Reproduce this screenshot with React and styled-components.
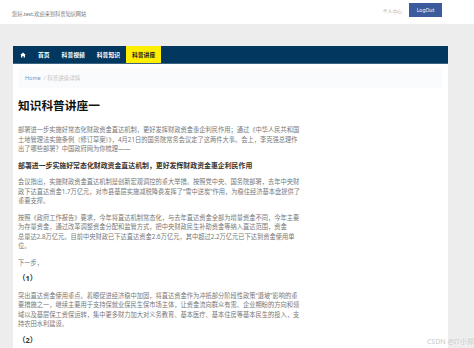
import styled, { createGlobalStyle } from "styled-components";

const GlobalStyle = createGlobalStyle`
  html, body {
    margin: 0;
    padding: 0;
    overflow: hidden;
    background: #ededed;
    font-family: "Noto Sans", "Noto Sans CJK SC", sans-serif;
  }
`;

const navItems = ["首页", "科普视频", "科普知识", "科普讲座"];

const App = () => {
  return (
    <Page>
      <GlobalStyle />
      <TopBar>
        <Welcome>您好,test,欢迎来到科普知识网站</Welcome>
        <UserBox>
          <UserLink>个人中心</UserLink>
          <LogOut>LogOut</LogOut>
        </UserBox>
      </TopBar>
      <Main>
        <Nav>
          <NavItem>
            <svg width="6" height="6" viewBox="0 0 12 12">
              <path d="M6 1 L11.5 6 H10 V11 H7.3 V7.8 H4.7 V11 H2 V6 H0.5 Z" fill="#fff" />
            </svg>
          </NavItem>
          {navItems.map((item, i) => (
            <NavItem key={item} active={i === navItems.length - 1}>
              {item}
            </NavItem>
          ))}
        </Nav>
        <Panel>
          <Crumbs>
            <CrumbLink>Home</CrumbLink>
            <CrumbRest>/ 科普讲座详情</CrumbRest>
          </Crumbs>
          <Article>
            <Title>知识科普讲座一</Title>
            <Para>
              部署进一步实施好常态化财政资金直达机制，更好发挥财政资金惠企利民作用；通过《中华人民共和国土地管理法实施条例（修订草案）》，4月21日的国务院常务会议定了这两件大事。会上，李克强总理作出了哪些部署？中国政府网为你梳理——
            </Para>
            <Heading>部署进一步实施好常态化财政资金直达机制，更好发挥财政资金惠企利民作用</Heading>
            <Para>
              会议指出，实施财政资金直达机制是创新宏观调控的重大举措。按照党中央、国务院部署，去年中央财政下达直达资金1.7万亿元，对市县基层实施减税降费发挥了“雪中送炭”作用，为稳住经济基本盘提供了重要支撑。
            </Para>
            <Para>
              按照《政府工作报告》要求，今年将直达机制常态化，与去年直达资金全部为增量资金不同，今年主要为存量资金，通过改革调整资金分配和监管方式，把中央财政民生补助资金等纳入直达范围，资金
              <br />
              总量达2.8万亿元。目前中央财政已下达直达资金2.6万亿元，其中超过2.2万亿元已下达到资金使用单位。
            </Para>
            <Para>下一步，</Para>
            <Heading big>（1）</Heading>
            <Para>
              突出直达资金使用重点。着眼促进经济稳中加固，将直达资金作为冲抵部分阶段性政策“退坡”影响的重要措施之一，继续主要用于支持保就业保民生保市场主体，让资金流向群众有需、企业期盼的方向和领域以及基层保工资保运转，集中更多财力加大对义务教育、基本医疗、基本住房等基本民生的投入，支持农田水利建设。
            </Para>
            <Heading big>（2）</Heading>
          </Article>
        </Panel>
      </Main>
      <Watermark>CSDN @IT小郑</Watermark>
    </Page>
  );
};

const Page = styled.div`
  position: relative;
  width: 474px;
  height: 348px;
  overflow: hidden;
`;

const TopBar = styled.div`
  height: 24px;
  background: #fff;
  display: flex;
  align-items: center;
  justify-content: space-between;
  padding: 0 32px 0 12px;
`;

const Welcome = styled.div`
  font-size: 5.2px;
  color: #777;
  margin-top: 3px;
`;

const UserBox = styled.div`
  display: flex;
  align-items: center;
  gap: 7px;
  margin-top: -4px;
`;

const UserLink = styled.span`
  font-size: 4.8px;
  color: #aaa;
`;

const LogOut = styled.button`
  width: 33px;
  height: 14px;
  border: none;
  padding: 0;
  background: #3b5b9d;
  color: #fff;
  font-family: "Noto Sans", sans-serif;
  font-size: 5px;
`;

const Main = styled.div`
  padding: 22px 26px 0 13px;
`;

const Nav = styled.div`
  display: flex;
  height: 18px;
  background: #02375f;
  border-bottom: 1px solid #3d6382;
  box-sizing: border-box;
`;

const NavItem = styled.div`
  display: flex;
  align-items: center;
  padding: 0 6px;
  font-size: 5.8px;
  font-weight: 700;
  color: ${(p) => (p.active ? "#222" : "#fff")};
  background: ${(p) => (p.active ? "#ffee00" : "transparent")};
  &:first-child {
    padding: 0 6px 0 7px;
  }
`;

const Panel = styled.div`
  background: #fff;
  padding: 4px 6px 30px 5px;
  min-height: 300px;
`;

const Crumbs = styled.div`
  height: 20px;
  background: #fafbfc;
  display: flex;
  align-items: center;
  gap: 3px;
  padding-left: 7px;
  font-size: 5.5px;
`;

const CrumbLink = styled.span`
  color: #6b97cf;
`;

const CrumbRest = styled.span`
  color: #c4c4c4;
`;

const Article = styled.div`
  width: 284px;
`;

const Title = styled.h1`
  margin: 10px 0 13px;
  font-size: 11.7px;
  line-height: 14px;
  font-weight: 700;
  color: #111;
`;

const Para = styled.p`
  margin: 0 0 7px;
  font-size: 6.25px;
  line-height: 9.5px;
  color: #777;
`;

const Heading = styled.p`
  margin: 0 0 7px;
  font-size: ${(p) => (p.big ? "7.5px" : "6.9px")};
  line-height: 9.5px;
  font-weight: 700;
  color: #333;
`;

const Watermark = styled.div`
  position: absolute;
  right: 0;
  bottom: 2px;
  font-size: 7px;
  color: #c8c8c8;
  text-shadow: 0 0 2px #fff;
`;

export default App;
